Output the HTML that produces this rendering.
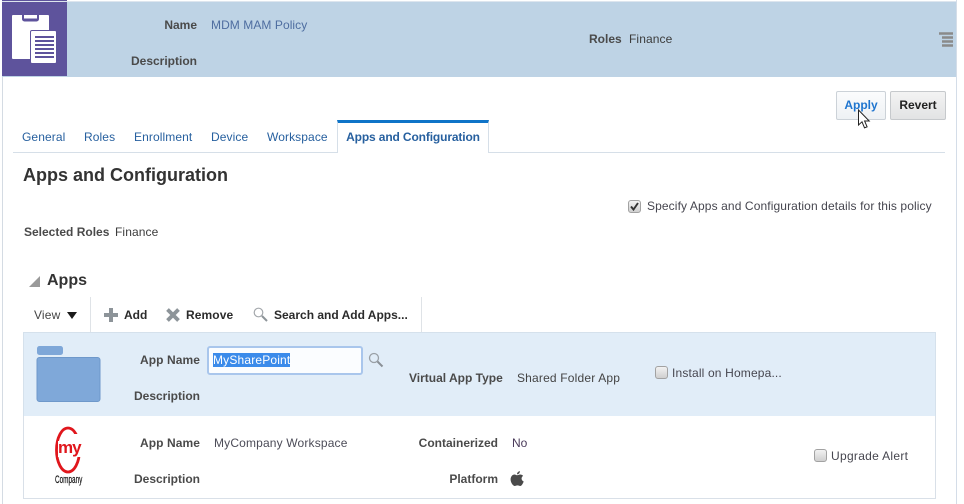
<!DOCTYPE html>
<html><head><meta charset="utf-8"><style>
html,body{margin:0;padding:0;background:#fff}
body{width:964px;height:504px;position:relative;overflow:hidden;font-family:"Liberation Sans",sans-serif;font-size:12px;color:#333}
.a{position:absolute;white-space:nowrap;line-height:14px}
.l{font-weight:bold;color:#4a4a4a}
.r{text-align:right}
.tab{color:#27609f;top:130px;letter-spacing:.1px}
.cb{position:absolute;width:11px;height:11px;border:1px solid #a2a2a2;border-radius:3px;background:linear-gradient(#f2f2f2,#cfcfcf)}
.tb{font-weight:bold;color:#2b2b2b}
</style></head><body>
<div class="a" style="left:2px;top:0;width:1px;height:504px;background:#d4dbe3"></div>
<div class="a" style="left:956px;top:0;width:1px;height:504px;background:#d4dde8"></div>
<div class="a" style="left:2px;top:1px;width:954px;height:75px;background:#bed3e5;border-top:1px solid #dde5ee"></div>
<div class="a" style="left:2px;top:2px;width:65px;height:74px;background:#5e539c"></div>
<div class="a" style="left:2px;top:0;width:65px;height:1px;background:#5e539c"></div>
<svg class="a" style="left:2px;top:2px" width="65" height="74" viewBox="0 0 65 74">
<rect x="10" y="13" width="37" height="44" rx="1" fill="#fff"/>
<path d="M20 13v4a2.500 2.500 0 0 0 2.500 2.500h12a2.500 2.500 0 0 0 2.500-2.500v-4h-2v3.500H22V13z" fill="#5e539c"/>
<rect x="28" y="28" width="27" height="34" rx="2" fill="#5e539c"/>
<rect x="29" y="29" width="25" height="32" rx="1" fill="#fff"/>
<path d="M33 34h19v2H33zM33 38h19v2H33zM33 42h19v2H33zM33 46h19v2H33zM33 50h19v2H33zM33 54h19v2H33z" fill="#5e539c"/>
</svg>
<div class="a l r" style="left:120px;width:77px;top:18px">Name</div>
<div class="a" style="left:211px;top:18px;color:#4e6da0;letter-spacing:.07px">MDM MAM Policy</div>
<div class="a l r" style="left:100px;width:97px;top:54px">Description</div>
<div class="a l" style="left:589px;top:32px">Roles</div>
<div class="a" style="left:629px;top:32px;color:#3c3c3c;letter-spacing:.1px">Finance</div>
<svg class="a" style="left:939px;top:32px" width="15" height="16"><path d="M0 1.500h14M3 5.500h11M3 9.500h11M3 13.500h11" stroke="#8a8a8a" stroke-width="2.600"/></svg>

<div class="a" style="left:836px;top:91px;width:48px;height:27px;border:1px solid #ccd2d8;border-radius:2px;background:linear-gradient(#fbfcfd,#eef1f4);text-align:center;line-height:26px;font-weight:bold;color:#1f75cf">Apply</div>
<div class="a" style="left:890px;top:91px;width:54px;height:27px;border:1px solid #c6c9cc;border-radius:2px;background:linear-gradient(#f3f3f3,#e2e3e4);text-align:center;line-height:26px;font-weight:bold;color:#222">Revert</div>
<svg class="a" style="left:857px;top:109px" width="14" height="21"><path d="M1.500 1v15l3.500-3.200 2.500 6 2.600-1-2.500-5.800h4.600z" fill="#fff" stroke="#222" stroke-width="1"/></svg>

<div class="a tab" style="left:22px">General</div>
<div class="a tab" style="left:84px">Roles</div>
<div class="a tab" style="left:134px">Enrollment</div>
<div class="a tab" style="left:211px">Device</div>
<div class="a tab" style="left:267px">Workspace</div>
<div class="a" style="left:13px;top:152px;width:932px;height:1px;background:#d6dfe8"></div>
<div class="a" style="left:337px;top:120px;width:152px;height:33px;background:#fff;border-top:3px solid #0f74c8;border-left:1px solid #d6dfe8;border-right:1px solid #d6dfe8;box-sizing:border-box;text-align:center;line-height:28px;font-weight:bold;color:#27609f;letter-spacing:-.13px">Apps and Configuration</div>

<div class="a" style="left:23px;top:165px;font-size:18px;line-height:20px;font-weight:bold;color:#333">Apps and Configuration</div>
<div class="cb" style="left:628px;top:200px"></div>
<svg class="a" style="left:629px;top:201px" width="11" height="11"><path d="M2 5.500l2.500 3L9 2" fill="none" stroke="#333" stroke-width="1.900"/></svg>
<div class="a" style="left:647px;top:199px;color:#46464f;letter-spacing:.11px">Specify Apps and Configuration details for this policy</div>
<div class="a l" style="left:24px;top:225px">Selected Roles</div>
<div class="a" style="left:115px;top:225px;color:#3c3c3c;letter-spacing:.1px">Finance</div>

<svg class="a" style="left:29px;top:276px" width="12" height="12"><path d="M11 0v11H0z" fill="#9a9a9a"/></svg>
<div class="a" style="left:47px;top:271px;font-size:16px;line-height:20px;font-weight:bold;color:#333">Apps</div>

<div class="a" style="left:34px;top:308px;color:#444;letter-spacing:.15px">View</div>
<svg class="a" style="left:67px;top:312px" width="10" height="7"><path d="M0 0h10L5 7z" fill="#1a1a1a"/></svg>
<div class="a" style="left:90px;top:297px;width:1px;height:35px;background:#dfe3e7"></div>
<div class="a" style="left:421px;top:297px;width:1px;height:35px;background:#dfe3e7"></div>
<svg class="a" style="left:104px;top:308px" width="14" height="14"><path d="M5 0h4v5h5v4H9v5H5V9H0V5h5z" fill="#8d9499"/></svg>
<div class="a tb" style="left:124px;top:308px">Add</div>
<svg class="a" style="left:166px;top:308px" width="14" height="14"><path d="M1.500 1.500l11 11M12.500 1.500l-11 11" stroke="#8d9499" stroke-width="3.800"/></svg>
<div class="a tb" style="left:186px;top:308px;letter-spacing:.1px">Remove</div>
<svg class="a" style="left:253px;top:307px" width="15" height="15"><circle cx="5.500" cy="5.500" r="4.300" fill="none" stroke="#a4a8ac" stroke-width="1.200"/><path d="M9 9l5 5" stroke="#8d9499" stroke-width="2"/></svg>
<div class="a tb" style="left:274px;top:308px">Search and Add Apps...</div>

<div class="a" style="left:23px;top:332px;width:911px;height:84px;background:#e1edf8;border:1px solid #d5e1ec;border-width:1px 1px 0 1px"></div>
<div class="a" style="left:23px;top:416px;width:911px;height:82px;background:#fff;border:1px solid #d9e0e8;border-top:0"></div>
<svg class="a" style="left:36px;top:345px" width="66" height="58"><rect x="1" y="1" width="26" height="9" rx="2.500" fill="#7ea7d8"/><rect x="1" y="12.500" width="63" height="44" rx="2.500" fill="#7fa8d9" stroke="#6e98ca"/></svg>
<div class="a l r" style="left:120px;width:80px;top:353px;letter-spacing:.08px">App Name</div>
<div class="a" style="left:207px;top:346px;width:152px;height:25px;background:#fbfdff;border:2px solid #a9c6ec;border-radius:3px"></div>
<div class="a" style="left:213px;top:353px;background:#3b8bea;color:#fff;line-height:14px;letter-spacing:.17px">MySharePoint</div>
<svg class="a" style="left:368px;top:352px" width="16" height="16"><circle cx="6" cy="6" r="4.500" fill="none" stroke="#9aa0a6" stroke-width="1.300"/><path d="M9.500 9.500l5 5" stroke="#8a9096" stroke-width="2"/></svg>
<div class="a l r" style="left:100px;width:100px;top:389px">Description</div>
<div class="a l" style="left:409px;top:371px">Virtual App Type</div>
<div class="a" style="left:517px;top:371px;color:#444;letter-spacing:.18px">Shared Folder App</div>
<div class="cb" style="left:655px;top:366px"></div>
<div class="a" style="left:672px;top:366px;color:#46464f;letter-spacing:.16px">Install on Homepa...</div>

<svg class="a" style="left:54px;top:426px" width="28" height="48"><ellipse cx="14" cy="24" rx="11.500" ry="22" fill="none" stroke="#e0161c" stroke-width="2.800"/><rect x="17" y="8" width="11" height="10" fill="#fff"/></svg>
<div class="a" style="left:58px;top:441px;font-size:17px;line-height:14px;font-weight:bold;color:#e0161c;letter-spacing:-1px;background:#fff;padding:0 1px 0 0;height:16px">my</div>
<div class="a" style="left:55px;top:474px;font-size:11px;line-height:12px;color:#111;transform:scaleX(.58);transform-origin:left;-webkit-text-stroke:.2px #111">Company</div>
<div class="a l r" style="left:120px;width:80px;top:436px;letter-spacing:.08px">App Name</div>
<div class="a" style="left:214px;top:436px;color:#4c4c58;letter-spacing:.16px">MyCompany Workspace</div>
<div class="a l r" style="left:100px;width:100px;top:472px">Description</div>
<div class="a l r" style="left:398px;width:100px;top:436px">Containerized</div>
<div class="a" style="left:512px;top:436px;color:#4a3a5a">No</div>
<div class="a l r" style="left:398px;width:100px;top:472px">Platform</div>
<svg class="a" style="left:510px;top:471px" width="14" height="16" viewBox="0 0 14 16"><path d="M7 4.200C8 4.200 9 3.500 10.300 3.500c1.100 0 2.100.5 2.800 1.400-2.300 1.400-1.900 4.600.6 5.600-.7 2-2.100 4.500-3.500 4.500-1 0-1.400-.6-2.700-.6s-1.700.6-2.700.6C3 15 .6 11.500.6 8.500c0-3 1.900-5 3.900-5 1 0 1.800.7 2.500.7zM7 3.300C6.900 1.800 8.200.3 9.900.1c.1 1.700-1.300 3.300-2.900 3.200z" fill="#4a4a4a"/></svg>
<div class="cb" style="left:814px;top:449px"></div>
<div class="a" style="left:831px;top:449px;color:#46464f;letter-spacing:.3px">Upgrade Alert</div>
</body></html>
